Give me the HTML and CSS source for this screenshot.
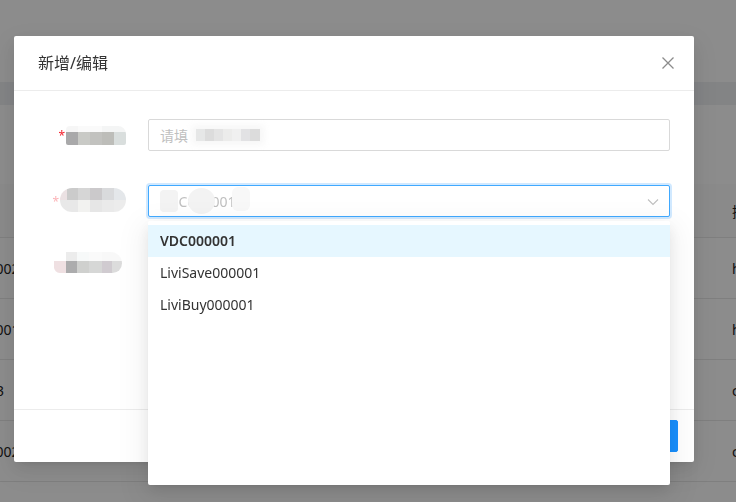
FILE: index.html
```html
<!DOCTYPE html>
<html lang="zh-CN">

<head>
    <meta charset="UTF-8">
    <meta name="viewport" content="width=device-width, initial-scale=1.0">
    <title>新增/编辑</title>
    <link rel="stylesheet" href="styles.css">
</head>

<body>
    <!-- page behind the dialog -->
    <div class="page">
        <div class="topbar"></div>
        <div class="tabs-band"></div>
        <div class="table">
            <div class="table-row table-head">
                <div class="cell-left"></div>
                <div class="cell-right">操作</div>
            </div>
            <div class="table-row">
                <div class="cell-left">LV0002</div>
                <div class="cell-right">https</div>
            </div>
            <div class="table-row">
                <div class="cell-left">LV0001</div>
                <div class="cell-right">https</div>
            </div>
            <div class="table-row">
                <div class="cell-left">0003</div>
                <div class="cell-right">cd</div>
            </div>
            <div class="table-row">
                <div class="cell-left">LV0002</div>
                <div class="cell-right">cd</div>
            </div>
        </div>
    </div>

    <div class="mask"></div>

    <div class="modal-wrap">
        <div class="modal">
            <div class="modal-header">
                <div class="modal-title">新增/编辑</div>
                <button class="modal-close" aria-label="关闭">
                    <svg width="14" height="14" viewBox="0 0 14 14">
                        <path d="M1.5 1.5 L12.5 12.5 M12.5 1.5 L1.5 12.5" stroke="#8c8c8c" stroke-width="1.3" fill="none" />
                    </svg>
                </button>
            </div>

            <div class="modal-body">
                <div class="field">
                    <div class="field-label">
                        <span class="req">*</span>
                        <span class="mosaic m1"><i class="row-a"></i><i class="row-b"></i></span>
                    </div>
                    <div class="field-control">
                        <div class="input">
                            <span class="placeholder">请填</span>
                            <span class="mosaic-inline"></span>
                        </div>
                    </div>
                </div>

                <div class="field">
                    <div class="field-label">
                        <span class="req req-faded">*</span>
                        <span class="mosaic m2"><i class="row-a"></i><i class="row-b"></i></span>
                    </div>
                    <div class="field-control">
                        <div class="select is-open">
                            <span class="select-value">VDC000001</span>
                            <span class="smudge smudge-1"></span>
                            <span class="smudge smudge-2"></span>
                            <span class="smudge smudge-3"></span>
                            <svg class="select-arrow" width="12" height="8" viewBox="0 0 12 8">
                                <path d="M1 1.5 L6 6.5 L11 1.5" stroke="#bfbfbf" stroke-width="1.1" fill="none" />
                            </svg>

                            <div class="dropdown">
                                <div class="option is-active">VDC000001</div>
                                <div class="option">LiviSave000001</div>
                                <div class="option">LiviBuy000001</div>
                            </div>
                        </div>
                    </div>
                </div>

                <div class="field">
                    <div class="field-label field-label-plain">
                        <span class="mosaic m3"><i class="row-a"></i><i class="row-b"></i></span>
                    </div>
                    <div class="field-control"></div>
                </div>
            </div>

            <div class="modal-footer">
                <button class="btn">取 消</button>
                <button class="btn btn-primary">确 定</button>
            </div>
        </div>
    </div>
</body>

</html>
```

FILE: styles.css
```css
body {
    margin: 0;
    background-color: #fff;
    font-family: "Noto Sans", "Noto Sans CJK SC", sans-serif;
    font-size: 14px;
    color: #333;
    overflow: hidden;
    height: 100vh;
}

/* ---- background page ---- */

.page {
    width: 100%;
}

.topbar {
    height: 82px;
}

.tabs-band {
    height: 23px;
    background-color: #eef0f3;
}

.table {
    margin-top: 79px;
}

.table-row {
    display: flex;
    justify-content: space-between;
    align-items: center;
    height: 60px;
    border-bottom: 1px solid #e8e8e8;
}

.table-head {
    height: 53px;
    background-color: #fbfbfb;
}

.cell-left {
    margin-left: -28px;
    color: #222;
}

.cell-right {
    width: 4px;
    white-space: nowrap;
    color: #222;
}

.mask {
    position: fixed;
    inset: 0;
    background-color: rgba(0, 0, 0, 0.45);
}

/* ---- dialog ---- */

.modal-wrap {
    position: fixed;
    inset: 0;
}

.modal {
    width: 680px;
    margin: 36px 0 0 14px;
    background-color: #fff;
    border-radius: 2px;
    box-shadow: 0 3px 6px -4px rgba(0, 0, 0, 0.12), 0 6px 16px rgba(0, 0, 0, 0.08), 0 9px 28px 8px rgba(0, 0, 0, 0.05);
}

.modal-header {
    display: flex;
    justify-content: space-between;
    align-items: center;
    padding: 16px 24px;
    border-bottom: 1px solid #ececec;
}

.modal-title {
    font-size: 16px;
    line-height: 22px;
    color: #333;
}

.modal-close {
    display: flex;
    border: none;
    background: none;
    padding: 0;
    margin-right: -5px;
    cursor: pointer;
}

.modal-body {
    height: 290px;
    padding: 28px 24px 0;
    display: flex;
    flex-direction: column;
    gap: 34px;
}

.field {
    display: flex;
    align-items: center;
    height: 32px;
}

.field-label {
    width: 110px;
    flex-shrink: 0;
    display: flex;
    justify-content: flex-end;
    align-items: center;
    padding-right: 22px;
    box-sizing: border-box;
}

.field-label-plain {
    padding-right: 26px;
    margin-top: -9px;
}

.field-control {
    flex: 1;
}

.req {
    color: #f5222d;
    font-size: 12px;
    line-height: 1;
    margin-right: 1px;
    margin-top: 2px;
}

.req-faded {
    opacity: 0.35;
}

/* pixelated (blurred-out) label text */
.mosaic {
    display: flex;
    flex-direction: column;
    overflow: hidden;
}

.mosaic i {
    display: block;
}

.m1 {
    width: 60px;
    border-radius: 4px 8px 2px 2px;
}

.m1 .row-a {
    height: 6px;
    background: linear-gradient(90deg, #f6f6f6 0 20%, #fafafa 20% 60%, #f4f5f5 60% 100%);
}

.m1 .row-b {
    height: 13px;
    background: linear-gradient(90deg, #a9a9aa 0 20%, #c9cac6 20% 40%, #c2c2bf 40% 60%, #bdbdb9 60% 80%, #d9dedd 80% 100%);
}

.m2 {
    width: 66px;
    border-radius: 12px;
    margin-top: -2px;
}

.m2 .row-a {
    height: 12px;
    background: linear-gradient(90deg, #ebe1e3 0 10%, #cbcbcb 10% 28%, #d6d6d6 28% 46%, #cbc9cb 46% 64%, #d9dadc 64% 82%, #e4e7ea 82% 100%);
}

.m2 .row-b {
    height: 12px;
    background: linear-gradient(90deg, #e8e8e8 0 28%, #f2f2f0 28% 46%, #e6e6e6 46% 64%, #eaeaea 64% 82%, #ececec 82% 100%);
}

.m3 {
    width: 68px;
    border-radius: 8px 12px 10px 6px;
}

.m3 .row-a {
    height: 9px;
    background: linear-gradient(90deg, #ffffff 0 18%, #ececec 18% 34%, #f7f9f9 34% 52%, #fafafa 52% 70%, #f8f8f8 70% 100%);
}

.m3 .row-b {
    height: 12px;
    background: linear-gradient(90deg, #efe0e2 0 18%, #acacad 18% 34%, #cfd0ce 34% 52%, #d6d7d6 52% 70%, #d0cbd0 70% 86%, #dcdcdc 86% 100%);
}

/* ---- inputs ---- */

.input,
.select {
    position: relative;
    display: flex;
    align-items: center;
    height: 32px;
    padding: 0 11px;
    border: 1px solid #d9d9d9;
    border-radius: 2px;
    box-sizing: border-box;
    background-color: #fff;
}

.placeholder {
    color: #bfbfbf;
}

.mosaic-inline {
    width: 64px;
    height: 12px;
    margin-left: 8px;
    background: linear-gradient(90deg, #e6e7e7 0 14%, #dcdcdc 14% 28%, #e4e4e4 28% 42%, #ececeb 42% 56%, #f0f0f0 56% 70%, #e2e2e4 70% 84%, #dcdcdc 84% 100%);
    box-shadow: 0 0 6px 4px rgba(242, 242, 242, 0.6);
}

.select.is-open {
    border-color: #40a9ff;
    box-shadow: 0 0 0 2px rgba(24, 144, 255, 0.2);
}

.select-value {
    color: #bfbfbf;
}

.smudge {
    position: absolute;
    background-color: #f3f3f3;
}

.smudge-1 {
    left: 11px;
    top: 4px;
    width: 18px;
    height: 22px;
    border-radius: 4px;
}

.smudge-2 {
    left: 39px;
    top: 2px;
    width: 27px;
    height: 26px;
    border-radius: 50%;
}

.smudge-3 {
    left: 83px;
    top: 1px;
    width: 18px;
    height: 24px;
    border-radius: 6px;
    background-color: #f8f8f8;
}

.select-arrow {
    position: absolute;
    right: 10px;
    top: 12px;
}

.dropdown {
    position: absolute;
    top: calc(100% + 5px);
    left: -1px;
    right: -1px;
    height: 256px;
    padding: 4px 0;
    background-color: #fff;
    border-radius: 2px;
    z-index: 10;
    box-shadow: 0 3px 6px -4px rgba(0, 0, 0, 0.12), 0 6px 16px rgba(0, 0, 0, 0.08), 0 9px 28px 8px rgba(0, 0, 0, 0.05);
}

.option {
    height: 32px;
    line-height: 32px;
    padding: 0 12px;
    color: #333;
}

.option.is-active {
    font-weight: 600;
    background-color: #e6f7ff;
}

/* ---- footer ---- */

.modal-footer {
    display: flex;
    justify-content: flex-end;
    gap: 8px;
    padding: 10px 16px;
    border-top: 1px solid #ececec;
}

.btn {
    height: 32px;
    padding: 0 15px;
    font-family: inherit;
    font-size: 14px;
    border: 1px solid #d9d9d9;
    border-radius: 2px;
    background-color: #fff;
    color: #333;
}

.btn-primary {
    border-color: #1890ff;
    background-color: #1890ff;
    color: #fff;
}
```
